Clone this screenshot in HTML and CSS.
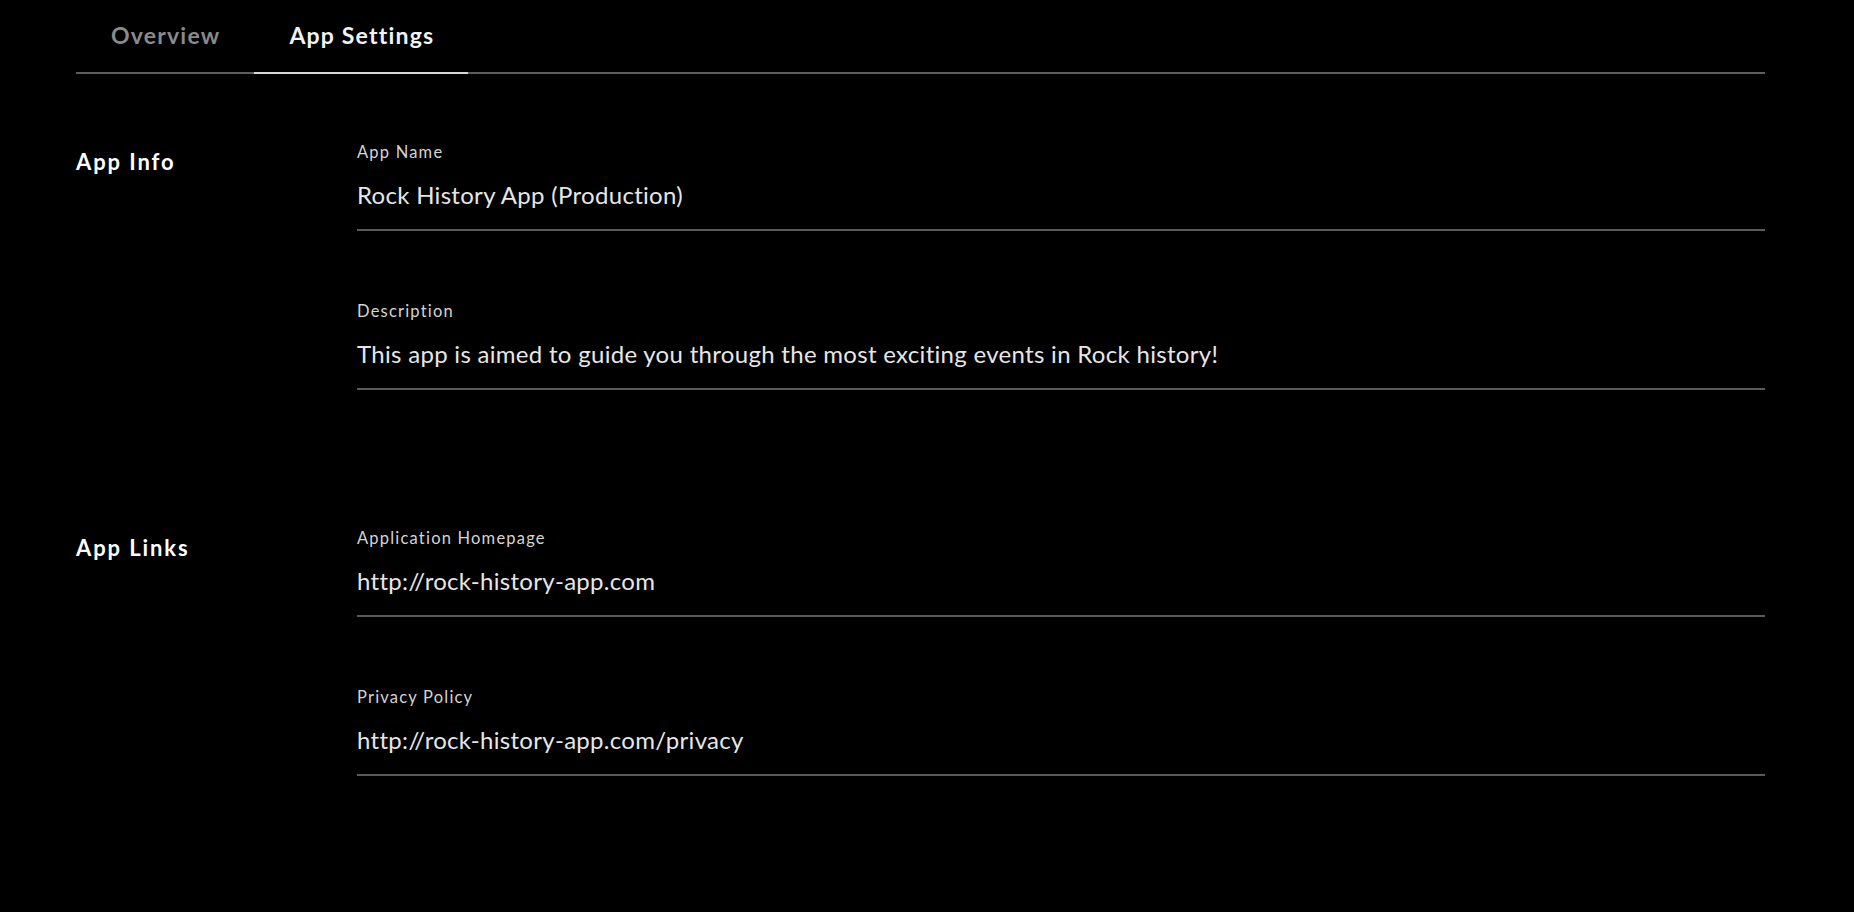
FILE: index.html
```html
<!DOCTYPE html>
<html lang="en">
<head>
<meta charset="utf-8">
<title>App Settings</title>
<link rel="stylesheet" href="styles.css">
</head>
<body>
<div class="page">
  <nav class="tabs">
    <div class="tab">Overview</div>
    <div class="tab tab-active">App Settings</div>
  </nav>

  <section class="section">
    <h2 class="section-title">App Info</h2>
    <div class="fields">
      <div class="field">
        <div class="field-label">App Name</div>
        <div class="field-value">Rock History App (Production)</div>
      </div>
      <div class="field">
        <div class="field-label">Description</div>
        <div class="field-value">This app is aimed to guide you through the most exciting events in Rock history!</div>
      </div>
    </div>
  </section>

  <section class="section section-links">
    <h2 class="section-title">App Links</h2>
    <div class="fields">
      <div class="field">
        <div class="field-label">Application Homepage</div>
        <div class="field-value">http://rock-history-app.com</div>
      </div>
      <div class="field">
        <div class="field-label">Privacy Policy</div>
        <div class="field-value">http://rock-history-app.com/privacy</div>
      </div>
    </div>
  </section>
</div>
</body>
</html>
```
FILE: styles.css
```css
html, body {
  margin: 0;
  padding: 0;
  background: #000;
}
body {
  font-family: Lato, "Open Sans", "Liberation Sans", sans-serif;
  color: #e8e8e8;
}
.page {
  width: 1689px;
  margin-left: 76px;
}
.tabs {
  display: flex;
  border-bottom: 2px solid #5e5e5e;
}
.tab {
  padding: 21px 34px 23px 35px;
  font-size: 23px;
  line-height: 28px;
  font-weight: 700;
  letter-spacing: 1.2px;
  color: #8a8a8a;
  margin-bottom: -2px;
  border-bottom: 2px solid transparent;
}
.tab-active {
  color: #f2f2f2;
  border-bottom-color: #d8d8d8;
}
.section {
  display: grid;
  grid-template-columns: 281px 1fr;
  margin-top: 68px;
}
.section-links {
  margin-top: 138px;
}
.section-title {
  margin: 0;
  padding-top: 7px;
  font-size: 22px;
  line-height: 26px;
  font-weight: 700;
  letter-spacing: 1.9px;
  color: #fff;
}
.fields {
  display: flex;
  flex-direction: column;
  gap: 70px;
}
.field {
  padding-bottom: 19px;
  border-bottom: 2px solid #5a5a5a;
}
.field-label {
  font-size: 16.5px;
  line-height: 20px;
  letter-spacing: 1.2px;
  color: #d4d4d4;
}
.field-value {
  margin-top: 18px;
  font-size: 24px;
  line-height: 30px;
  letter-spacing: 0.3px;
  color: #e6e6e6;
}
```
